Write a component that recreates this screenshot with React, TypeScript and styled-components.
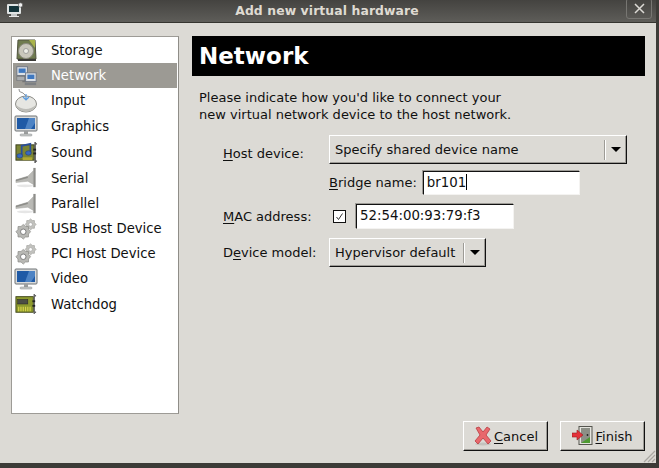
import React from "react";
import styled, { createGlobalStyle } from "styled-components";

const GlobalStyle = createGlobalStyle`
  html, body { margin: 0; padding: 0; background: #3c3b37; }
  body { font-family: "DejaVu Sans", sans-serif; font-size: 13px; color: #101010; }
`;

const Window = styled.div`
  position: relative;
  width: 659px;
  height: 468px;
  display: flex;
  flex-direction: column;
  overflow: hidden;
  box-sizing: border-box;
  border-right: 3px solid #3c3b37;
  border-bottom: 5px solid #3c3b37;
  background: #dcdad5;
`;

const TitleBar = styled.div`
  position: relative;
  height: 23px;
  flex: none;
  display: flex;
  align-items: center;
  justify-content: center;
  background: linear-gradient(#444340, #5e5d59);
  border-bottom: 1px solid #35342f;
  box-sizing: border-box;
`;

const TitleIcon = styled.svg`
  position: absolute;
  left: 6px;
  top: 2px;
`;

const Title = styled.span`
  font-size: 12.4px;
  font-weight: bold;
  color: #dfdbd2;
  margin-top: -1px;
  margin-right: 2px;
  letter-spacing: 0.1px;
`;

const CloseButton = styled.div`
  position: absolute;
  right: 4px;
  top: -2px;
  width: 24px;
  height: 19px;
  border: 1px solid #777672;
  border-radius: 3px;
  display: flex;
  align-items: center;
  justify-content: center;
`;

const Main = styled.div`
  flex: 1;
  display: flex;
  flex-direction: column;
  padding: 13px 11px 12px 11px;
  min-height: 0;
`;

const Columns = styled.div`
  flex: 1;
  display: flex;
  gap: 13px;
  min-height: 0;
`;

const Sidebar = styled.div`
  width: 168px;
  height: 378px;
  flex: none;
  box-sizing: border-box;
  background: #fff;
  border: 1px solid #9d9b96;
  border-right-color: #8f8d88;
  padding: 0 1px;
  font-size: 13.2px;
`;

const Row = styled.div<{ $selected?: boolean; $tall?: boolean }>`
  height: ${(p) => (p.$tall ? 26 : 25)}px;
  display: flex;
  align-items: center;
  background: ${(p) => (p.$selected ? "#9c9a94" : "transparent")};
  color: ${(p) => (p.$selected ? "#fff" : "#101010")};
`;

const RowIcon = styled.div`
  width: 26px;
  margin-right: 12px;
  flex: none;
  display: flex;
  justify-content: center;
`;

const Panel = styled.div`
  width: 453px;
  flex: none;
  display: flex;
  flex-direction: column;
`;

const Banner = styled.div`
  height: 40px;
  background: #000;
  color: #fff;
  font-size: 23px;
  font-weight: bold;
  display: flex;
  align-items: center;
  padding-left: 7px;
`;

const Intro = styled.p`
  margin: 13px 0 0 7px;
  line-height: 17px;
`;

const Form = styled.div`
  margin: 12px 18px 0 32px;
  display: grid;
  grid-template-columns: 105px 1fr;
  align-items: center;
`;

const Label = styled.label<{ $drop?: number }>`
  white-space: nowrap;
  margin-left: -1px;
  padding-top: ${(p) => p.$drop ?? 0}px;
  u { text-underline-offset: 2px; }
`;

const BridgeLabel = styled(Label)`
  margin-left: 0;
  padding-bottom: 2px;
`;

const Combo = styled.div<{ $width?: number }>`
  width: ${(p) => (p.$width ? `${p.$width}px` : "100%")};
  height: 29px;
  box-sizing: border-box;
  display: flex;
  align-items: center;
  padding-left: 5px;
  background: #dcdad5;
  border-top: 1px solid #fff;
  border-left: 1px solid #fff;
  border-right: 1px solid #111;
  border-bottom: 1px solid #111;
  box-shadow: inset -1px -1px 0 #9d9b96;
`;

const ComboText = styled.span`
  flex: 1;
`;

const ComboArrow = styled.div`
  flex: none;
  width: 21px;
  height: 20px;
  box-sizing: border-box;
  border-left: 1px solid #fff;
  box-shadow: -1px 0 0 #9d9b96;
  display: flex;
  align-items: center;
  justify-content: center;

  &::after {
    content: "";
    border-left: 5px solid transparent;
    border-right: 5px solid transparent;
    border-top: 5px solid #000;
  }
`;

const BridgeRow = styled.div`
  grid-column: 2;
  display: flex;
  align-items: center;
  gap: 6px;
  margin-top: 7px;
`;

const MacField = styled.div`
  display: flex;
  align-items: center;
  gap: 10px;
  padding-left: 4px;
`;

const FormGap = styled.div<{ $h: number }>`
  grid-column: 1 / -1;
  height: ${(p) => p.$h}px;
`;

const Entry = styled.div<{ $width: number; $height: number }>`
  position: relative;
  width: ${(p) => p.$width}px;
  height: ${(p) => p.$height}px;
  box-sizing: border-box;
  background: #fff;
  border-top: 1px solid #111;
  border-left: 1px solid #111;
  border-right: 1px solid #f4f3f1;
  border-bottom: 1px solid #f4f3f1;
  box-shadow: -1px -1px 0 #9d9b96;
  display: flex;
  align-items: center;
  padding: 0 0 2px 3px;
  font-size: 13.33px;
`;

const Caret = styled.span`
  display: inline-block;
  width: 1px;
  height: 16px;
  background: #000;
`;

const Check = styled.div`
  width: 13px;
  height: 13px;
  box-sizing: border-box;
  background: #fff;
  border: 1px solid #111;
  display: flex;
  align-items: center;
  justify-content: center;
`;

const Footer = styled.div`
  display: flex;
  justify-content: flex-end;
  gap: 12px;
  margin-top: 7px;
`;

const Button = styled.button`
  width: 85px;
  height: 30px;
  box-sizing: border-box;
  padding: 0;
  font: inherit;
  color: #101010;
  background: #dcdad5;
  border-top: 1px solid #fff;
  border-left: 1px solid #fff;
  border-right: 1px solid #111;
  border-bottom: 1px solid #111;
  box-shadow: inset -1px -1px 0 #9d9b96;
  display: flex;
  align-items: center;
  justify-content: center;
  gap: 1px;
  u { text-underline-offset: 2px; }
`;

const Grip = styled.svg`
  position: absolute;
  right: 0;
  bottom: 0;
`;

function Monitor() {
  return (
    <svg width="24" height="24" viewBox="0 0 24 24">
      <rect x="1" y="2" width="22" height="15" rx="1" fill="#d8dadb" stroke="#6f7274" />
      <rect x="3" y="4" width="18" height="11" fill="#1f5aa6" />
      <path d="M11 15 L15 4 H21 V9 L17 15 Z" fill="#4d83c4" />
      <rect x="10" y="17" width="4" height="3" fill="#9c9e9f" />
      <rect x="6" y="20" width="12" height="2" rx="1" fill="#c9cbcc" stroke="#85888a" strokeWidth="0.5" />
    </svg>
  );
}

function Storage() {
  return (
    <svg width="24" height="24" viewBox="0 0 24 24">
      <path d="M4 2 H21 L22 21 H3 Z" fill="#6f7b4f" stroke="#50533f" />
      <path d="M15 2 H21 L21 10 Z" fill="#a9b34a" />
      <circle cx="12" cy="13" r="7.5" fill="#c9c7bc" stroke="#8c8b80" />
      <circle cx="12" cy="13" r="2.5" fill="#eeeee8" stroke="#888" strokeWidth="0.7" />
      <rect x="4" y="21" width="18" height="2" fill="#3c3c38" />
    </svg>
  );
}

function Network() {
  return (
    <svg width="21" height="21" viewBox="0 0 24 24">
      <path d="M8 13 V19 H12" fill="none" stroke="#777" strokeWidth="1.5" />
      <rect x="1" y="2" width="12" height="10" fill="#dde1e6" stroke="#6a7280" />
      <rect x="3" y="4" width="8" height="5" fill="#3f78c0" />
      <rect x="1" y="13" width="9" height="5" fill="#a9acaf" stroke="#6a6c6e" strokeWidth="0.6" />
      <rect x="11" y="9" width="12" height="10" fill="#dde1e6" stroke="#6a7280" />
      <rect x="13" y="11" width="8" height="5" fill="#3f78c0" />
      <rect x="10" y="20" width="13" height="3" fill="#7e8184" />
    </svg>
  );
}

function Mouse() {
  return (
    <svg width="24" height="24" viewBox="0 0 24 24">
      <path d="M5 0 Q4 3 9 4 L12 7" fill="none" stroke="#777" strokeWidth="0.8" />
      <ellipse cx="12" cy="15" rx="10.5" ry="8" fill="#e6e6e2" stroke="#8d8d88" />
      <path d="M2 16 Q12 24 22 16 Q20 22.500 12 22.800 Q4 22.500 2 16Z" fill="#bdbdb8" />
      <path d="M9 8 L12 11 L15 8 M12 5 V11" fill="none" stroke="#5a9be0" strokeWidth="1.2" />
    </svg>
  );
}

function Sound() {
  return (
    <svg width="23" height="23" viewBox="0 0 24 24">
      <rect x="1" y="4" width="19" height="16" fill="#7a8434" stroke="#3b3f1e" />
      <rect x="8" y="17" width="10" height="3" fill="#b0a832" />
      <path d="M21 1 V23 M21 3 H23 M21 21 H23" stroke="#555" strokeWidth="1.5" fill="none" />
      <rect x="19" y="8" width="3" height="2" fill="#222" />
      <rect x="19" y="12" width="3" height="2" fill="#222" />
      <path d="M7 15 V5 L16 3 V12" fill="none" stroke="#2a4f9a" strokeWidth="1.800" />
      <ellipse cx="5" cy="15.500" rx="3" ry="2.300" fill="#3a69bd" stroke="#1f3d7c" strokeWidth="0.6" />
      <ellipse cx="14" cy="12.500" rx="3" ry="2.300" fill="#3a69bd" stroke="#1f3d7c" strokeWidth="0.6" />
    </svg>
  );
}

function Port() {
  return (
    <svg width="22" height="24" viewBox="0 0 24 24">
      <ellipse cx="11" cy="20.500" rx="9" ry="1.500" fill="#e6e6e6" />
      <path d="M1 14 L14 10 L20 4 V19 L14 15.500 L1 17 Z" fill="#b9b9b5" stroke="#a3a39f" strokeWidth="0.5" />
      <path d="M1 14 L14 10 L14 12 L1 15.500 Z" fill="#8e8e8a" />
      <rect x="20" y="1" width="2.500" height="21" fill="#8d8d89" />
    </svg>
  );
}

function gearPath(cx: number, cy: number, r: number, teeth: number) {
  const pts: string[] = [];
  for (let i = 0; i < teeth * 2; i++) {
    const a = (i * Math.PI) / teeth;
    const rr = i % 2 === 0 ? r : r * 0.78;
    pts.push(`${(cx + rr * Math.cos(a)).toFixed(1)} ${(cy + rr * Math.sin(a)).toFixed(1)}`);
  }
  return `M${pts.join(" L")}Z`;
}

function Gears() {
  return (
    <svg width="22" height="22" viewBox="0 0 24 24">
      <path d={gearPath(17, 7, 6, 8)} fill="#c2c2be" stroke="#a0a09c" strokeWidth="0.7" />
      <circle cx="17" cy="7" r="2" fill="#fff" stroke="#999" strokeWidth="0.6" />
      <path d={gearPath(9, 15, 8, 8)} fill="#b8b8b4" stroke="#858581" strokeWidth="0.7" />
      <circle cx="9" cy="15" r="3" fill="#fff" stroke="#777" />
    </svg>
  );
}

function Watchdog() {
  return (
    <svg width="22" height="22" viewBox="0 0 24 24">
      <rect x="1" y="4" width="19" height="17" fill="#8d9a2e" stroke="#3e4418" />
      <rect x="3" y="7" width="11" height="5" fill="#4b4d44" stroke="#222" strokeWidth="0.5" />
      <path d="M4 15 V20 M6.500 15 V20 M9 15 V20 M11.500 15 V20 M14 15 V20 M16.500 15 V20" stroke="#d7d34a" strokeWidth="1.300" />
      <path d="M21 1 V23 M21 3 H23 M21 21 H23" stroke="#666" strokeWidth="1.5" fill="none" />
      <rect x="19" y="8" width="3" height="2" fill="#222" />
      <rect x="19" y="13" width="3" height="2" fill="#222" />
    </svg>
  );
}

function CancelIcon() {
  return (
    <svg width="20" height="20" viewBox="0 0 20 20">
      <ellipse cx="10" cy="18" rx="8" ry="1.500" fill="#c4c2bd" />
      <path
        d="M3 2 L6 1 L10 6 L14 1 L17 3 L13 9 L18 15 L15 18 L10 12 L5 18 L2 15 L7 9 Z"
        fill="#e8686c"
        stroke="#b93b40"
        strokeWidth="0.8"
      />
    </svg>
  );
}

function FinishIcon() {
  return (
    <svg width="22" height="20" viewBox="0 0 22 20">
      <rect x="7" y="0.500" width="13" height="18" fill="#e4e4de" stroke="#55554f" />
      <path d="M9 2 H18 V17 H9 Z" fill="#8c8f86" />
      <path d="M9 17 L18 11 V17 Z" fill="#4e9a32" />
      <circle cx="15.500" cy="9" r="0.900" fill="#222" />
      <path d="M0 7 H5 V4 L11 9 L5 14 V11 H0 Z" fill="#e3313a" stroke="#9c1a20" strokeWidth="0.6" />
    </svg>
  );
}

const ITEMS: { name: string; icon: React.ReactNode; tall?: boolean; selected?: boolean }[] = [
  { name: "Storage", icon: <Storage />, tall: true },
  { name: "Network", icon: <Network />, selected: true },
  { name: "Input", icon: <Mouse /> },
  { name: "Graphics", icon: <Monitor />, tall: true },
  { name: "Sound", icon: <Sound />, tall: true },
  { name: "Serial", icon: <Port />, tall: true },
  { name: "Parallel", icon: <Port /> },
  { name: "USB Host Device", icon: <Gears /> },
  { name: "PCI Host Device", icon: <Gears /> },
  { name: "Video", icon: <Monitor /> },
  { name: "Watchdog", icon: <Watchdog />, tall: true },
];

export default function App() {
  return (
    <Window>
      <GlobalStyle />
      <TitleBar>
        <TitleIcon width="18" height="17" viewBox="0 0 18 17">
          <rect x="1" y="2" width="14" height="10" rx="1" fill="#dfe3e3" />
          <rect x="3" y="4" width="10" height="6" fill="#14343a" />
          <rect x="5" y="12" width="6" height="2" fill="#c4c8c8" />
          <rect x="3" y="14" width="10" height="1" fill="#e8e8e8" />
          <circle cx="14.500" cy="3" r="2.200" fill="#f0f0f0" stroke="#555" strokeWidth="0.6" />
        </TitleIcon>
        <Title>Add new virtual hardware</Title>
        <CloseButton>
          <svg width="11" height="11" viewBox="0 0 11 11">
            <path d="M1 1 L10 10 M10 1 L1 10" stroke="#dcdad5" strokeWidth="1.500" />
          </svg>
        </CloseButton>
      </TitleBar>
      <Main>
        <Columns>
          <Sidebar>
            {ITEMS.map((item) => (
              <Row key={item.name} $selected={item.selected} $tall={item.tall}>
                <RowIcon>{item.icon}</RowIcon>
                <span>{item.name}</span>
              </Row>
            ))}
          </Sidebar>
          <Panel>
            <Banner>Network</Banner>
            <Intro>
              Please indicate how you'd like to connect your
              <br />
              new virtual network device to the host network.
            </Intro>
            <Form>
              <Label $drop={7}>
                <u>H</u>ost device:
              </Label>
              <Combo>
                <ComboText>Specify shared device name</ComboText>
                <ComboArrow />
              </Combo>
              <BridgeRow>
                <BridgeLabel>
                  <u>B</u>ridge name:
                </BridgeLabel>
                <Entry $width={157} $height={24}>
                  br101
                  <Caret />
                </Entry>
              </BridgeRow>
              <FormGap $h={9} />
              <Label>
                <u>M</u>AC address:
              </Label>
              <MacField>
                <Check>
                  <svg width="9" height="9" viewBox="0 0 9 9">
                    <path d="M1.500 5 L3.500 7.500 L7.500 1.500" fill="none" stroke="#333" strokeWidth="1" />
                  </svg>
                </Check>
                <Entry $width={158} $height={25}>52:54:00:93:79:f3</Entry>
              </MacField>
              <FormGap $h={9} />
              <Label>
                D<u>e</u>vice model:
              </Label>
              <Combo $width={157}>
                <ComboText>Hypervisor default</ComboText>
                <ComboArrow />
              </Combo>
            </Form>
          </Panel>
        </Columns>
        <Footer>
          <Button>
            <CancelIcon />
            <span>
              <u>C</u>ancel
            </span>
          </Button>
          <Button>
            <FinishIcon />
            <span>
              <u>F</u>inish
            </span>
          </Button>
        </Footer>
      </Main>
      <Grip width="14" height="14" viewBox="0 0 14 14">
        <path d="M13 2 L2 13 M13 6 L6 13 M13 10 L10 13" stroke="#a9a7a2" strokeWidth="1.200" />
      </Grip>
    </Window>
  );
}
